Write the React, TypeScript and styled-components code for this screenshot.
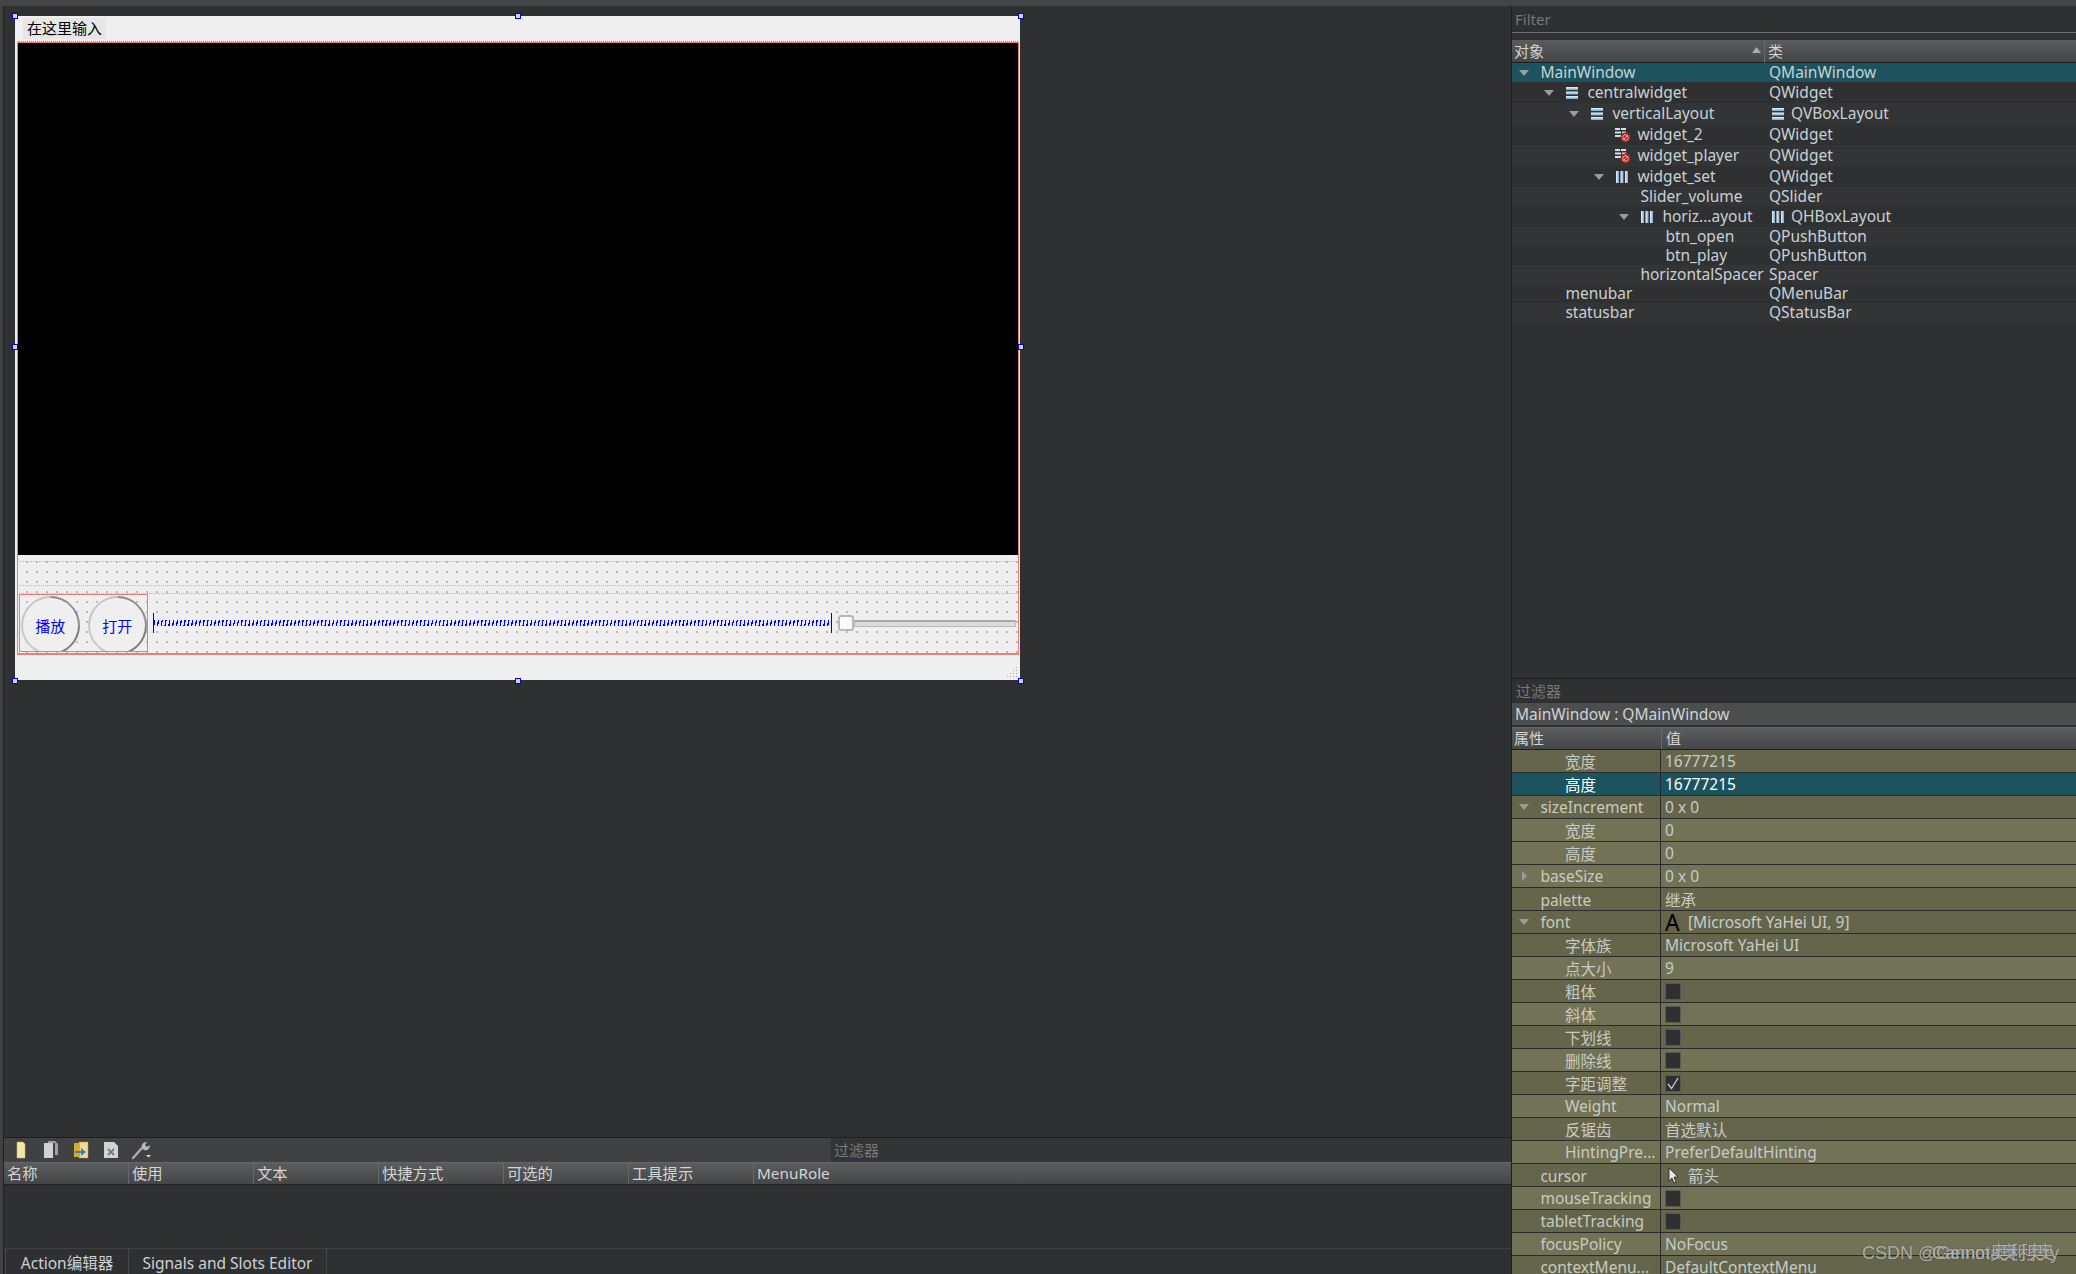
import React from "react";
import styled, { createGlobalStyle } from "styled-components";

const GlobalStyle = createGlobalStyle`
  html, body { margin: 0; padding: 0; width: 2076px; height: 1274px; overflow: hidden; background: #2f3032; }
  body { font-family: "Noto Sans", "Noto Sans CJK SC", sans-serif; font-size: 15.5px; color: #c8ccc8; }
  * { box-sizing: border-box; }
`;

const Page = styled.div`
  width: 2076px; height: 1274px; display: flex; flex-direction: column; overflow: hidden; position: relative;
`;
const TopBar = styled.div`
  height: 6px; flex: none; background: #434547; overflow: hidden; display: block;
`;
const Body = styled.div`
  flex: 1; min-height: 0; display: flex;
`;
const LeftStrip = styled.div`
  width: 4px; flex: none; background: #3f4143; border-right: 1px solid #1f2021;
`;
const Center = styled.div`
  width: 1507px; flex: none; display: flex; flex-direction: column;
`;
const Canvas = styled.div`
  flex: 1; min-height: 0; padding: 10px 0 0 11px; background: #2f3032;
`;
const Form = styled.div`
  width: 1005px; height: 664px; background: #efefef; position: relative;
`;
const MenuBar = styled.div`
  height: 24px; padding: 2px 0 0 8px; background: #efefef;
`;
const MenuHint = styled.div`
  width: 83px; height: 21px; background: #e6e6e6; color: #000; font-size: 15px; line-height: 21px; text-align: center;
`;
const LayoutBox = styled.div`
  margin: 2px 0 0 2px; width: 1002px; height: 613px; border: 1px solid #f47a7a; border-bottom-width: 2px; display: flex; flex-direction: column; position: relative;
  &::before { content: ""; position: absolute; left: 0; right: 0; top: -2px; border-top: 1px dotted #999; }
`;
const Video = styled.div`
  height: 512px; flex: none; background: #000;
`;
const SetArea = styled.div`
  flex: 1; padding: 6px 0 0 1px; display: flex; flex-direction: column;
  background-image: radial-gradient(circle at center, #9a9a9a 0.65px, transparent 0.8px);
  background-size: 10px 10px;
  background-position: 4px 2px;
`;
const DotLine = styled.div<{ $gap: number }>`
  height: 1px; margin-top: ${(p) => p.$gap}px; border-top: 1px dotted #b5b5b5; flex: none;
`;
const ControlRow = styled.div`
  height: 58px; display: flex; align-items: center;
`;
const ButtonBox = styled.div`
  width: 129px; height: 58px; flex: none; border: 1px solid #f47a7a; display: flex; gap: 8px; padding: 1px 0 0 1px; overflow: hidden;
`;
const RoundButton = styled.div`
  width: 59px; height: 59px; flex: none; border-radius: 50%;
  border: 2.5px solid; border-color: #c4c4c4 #8c8c8c #7c7c7c #c8c8c8; transform: rotate(-45deg);
  display: flex; align-items: center; justify-content: center; background: #efefef; 
`;
const ButtonLabel = styled.span`
  color: #0000ff; font-size: 15px; transform: rotate(45deg);
`;
const Slider = styled.div`
  margin-left: 5px; flex: 1; height: 20px; display: flex; align-items: center; padding-right: 2px;
`;
const SliderFill = styled.div`
  width: 679px; height: 20px; flex: none; border-left: 1.5px solid #0000dd; border-right: 1.5px solid #0000dd; display: flex; align-items: center;
`;
const Wave = styled.div`
  width: 100%; height: 6px;
  background: repeating-linear-gradient(100deg, #0000ff 0 1.3px, #e6e6ff 1.3px 3.75px);
`;
const SliderHandle = styled.div`
  width: 16px; height: 16px; margin-left: 6px; flex: none; border: 2px solid #b8b8b8; border-radius: 3px; background: #fbfbfb;
`;
const SliderGroove = styled.div`
  flex: 1; height: 7px; background: #dcdcdc; border: 1px solid #b9b9b9; border-top: 2px solid #a9a9a9; border-radius: 1px;
`;
const Handle = styled.div<{ $x: number; $y: number }>`
  position: absolute; width: 6px; height: 6px; border: 1.5px solid #0000e0; background: #cfd2e8;
  left: ${(p) => p.$x}px; top: ${(p) => p.$y}px;
`;
const Grip = styled.svg`
  position: absolute; right: 2px; bottom: 2px;
`;

const ActionPanel = styled.div`
  height: 137px; flex: none; border-top: 1px solid #1d1e1f; display: flex; flex-direction: column; background: #2f3032;
`;
const ActionBar = styled.div`
  height: 24px; flex: none; background: #3f4143; display: flex; align-items: center; padding-left: 7px;
`;
const ToolIcon = styled.svg`
  width: 20px; height: 20px; margin-right: 10px; flex: none;
`;
const ActionFilter = styled.div`
  margin-left: auto; width: 680px; height: 24px; background: #333436; color: #77797a; font-size: 15px; line-height: 24px; padding-left: 3px;
`;
const ActionHead = styled.div`
  height: 23px; flex: none; display: grid; grid-template-columns: repeat(6, 125px) 1fr;
  background: linear-gradient(#5a5c5d, #444648); border-bottom: 1px solid #222; border-top: 1px solid #636566;
`;
const HeadCell = styled.div`
  padding-left: 3px; border-right: 1px solid #66686a; color: #d4d4d4; font-size: 15.3px; line-height: 21px; white-space: nowrap;
  &:last-child { border-right: 0; }
`;
const ActionEmpty = styled.div`
  flex: 1;
`;
const Tabs = styled.div`
  height: 26px; flex: none; display: flex; border-top: 1px solid #3f4143; padding-left: 1px;
`;
const Tab = styled.div<{ $w: number }>`
  width: ${(p) => p.$w}px; height: 25px; border-right: 1px solid #45474a; border-left: 1px solid #45474a; color: #d0d0d0; font-size: 15.5px; line-height: 28px; text-align: center; white-space: nowrap;
  & + & { border-left: 0; }
`;

const RightPanel = styled.div`
  width: 565px; flex: none; border-left: 1px solid #1d1e1f; display: flex; flex-direction: column; background: #2f3032;
`;
const TreeSection = styled.div`
  flex: 1; min-height: 0; display: flex; flex-direction: column;
`;
const FilterInput = styled.div`
  height: 27px; flex: none; border-bottom: 1px solid #6d6f70; color: #77797a; font-size: 15px; line-height: 26px; padding-left: 3px; background: #2f3032;
`;
const TreeHead = styled.div`
  margin-top: 7px; height: 23px; flex: none; display: grid; grid-template-columns: 253px 1fr;
  background: linear-gradient(#5a5c5d, #444648); border-bottom: 1px solid #1d1e1f;
`;
const TreeHeadCell = styled.div`
  position: relative; padding-left: 2px; color: #d4d4d4; font-size: 15px; line-height: 23px;
  &:first-child { border-right: 1px solid #66686a; }
  & + & { padding-left: 3px; }
`;
const SortMark = styled.svg`
  position: absolute; right: 3px; top: 7px;
`;
const TreeRow = styled.div<{ $h: number; $tone: string }>`
  height: ${(p) => p.$h}px; display: grid; grid-template-columns: 253px 1fr; align-items: center; background: ${(p) => p.$tone};
  line-height: ${(p) => p.$h}px;
`;
const TreeName = styled.div<{ $depth: number }>`
  display: flex; align-items: center; padding-left: ${(p) => 7 + 25 * p.$depth}px; white-space: nowrap; color: #c8d0d4; overflow: visible;
`;
const Twisty = styled.div`
  width: 21.4px; flex: none; display: flex; align-items: center;
`;
const NodeIcon = styled.div`
  width: 22px; flex: none; margin-left: 0; display: flex; align-items: center;
`;
const TreeClass = styled.div`
  display: flex; align-items: center; padding-left: 4px; color: #c8d0d4;
`;
const ClassIcon = styled.div`
  width: 22px; flex: none; display: flex; align-items: center; padding-left: 2px;
`;

const PropSection = styled.div`
  height: 596px; flex: none; border-top: 1px solid #1d1e1f; display: flex; flex-direction: column; overflow: hidden;
`;
const PropFilter = styled.div`
  height: 24px; flex: none; color: #77797a; font-size: 15px; line-height: 24px; padding-left: 4px;
`;
const PropTitle = styled.div`
  height: 22px; flex: none; background: #4c4e4e; color: #cfd3d3; font-size: 15.5px; line-height: 22px; padding-left: 3px; white-space: nowrap;
`;
const PropHead = styled.div`
  margin-top: 2px; height: 23px; flex: none; display: grid; grid-template-columns: 149px 1fr;
  background: linear-gradient(#5a5c5d, #444648); border-bottom: 1px solid #1d1e1f; border-top: 1px solid #636566;
`;
const PropHeadCell = styled.div`
  padding-left: 2px; color: #d4d4d4; font-size: 15px; line-height: 21px;
  & + & { padding-left: 4px; border-left: 1px solid #66686a; }
`;
const PropRow = styled.div<{ $tone: string }>`
  height: 23px; flex: none; display: grid; grid-template-columns: 149px 1fr; background: ${(p) => p.$tone}; border-bottom: 1px solid #2a2b2c;
`;
const PropName = styled.div<{ $level: number; $sel?: boolean }>`
  display: flex; align-items: center; padding-left: ${(p) => (p.$level ? 53 : 7)}px; border-right: 1px solid #2a2b2c; white-space: nowrap; overflow: hidden;
  color: ${(p) => (p.$sel ? "#fff" : "#c9cbc0")};
`;
const PropValue = styled.div<{ $sel?: boolean }>`
  display: flex; align-items: center; padding-left: 4px; white-space: nowrap; color: ${(p) => (p.$sel ? "#fff" : "#c6cccb")};
`;
const Check = styled.div`
  width: 16px; height: 17px; background: #2f3032; border: 1px solid #585a50; border-radius: 1px; display: flex; align-items: center; justify-content: center;
`;
const BigA = styled.span`
  color: #000; font-size: 23px; width: 23px; line-height: 22px; flex: none;
`;
const CursorWrap = styled.div`
  width: 23px; flex: none; display: flex; padding-left: 3px;
`;
const Watermark = styled.div`
  position: absolute; left: 1862px; top: 1241px; width: 214px; height: 24px; font-family: "Liberation Sans", "Noto Sans CJK SC", sans-serif; font-size: 18px; line-height: 24px; color: rgba(225,225,225,0.72); white-space: nowrap; text-shadow: 0 0 1px rgba(0,0,0,.6);
`;
const WatermarkOver = styled.span`
  position: absolute; left: 70px; top: 0;
`;

const Tri = ({ open }: { open: boolean }) =>
  open ? (
    <svg width="10" height="6" viewBox="0 0 10 6"><path d="M0 0h10L5 6z" fill="#9a9c9c" /></svg>
  ) : (
    <svg width="10" height="10" viewBox="0 0 10 10"><path d="M3 0v10l5-5z" fill="#9a9c9c" /></svg>
  );

const BarDefs = () => (
  <defs>
    <linearGradient id="vb" x1="0" y1="0" x2="0" y2="1">
      <stop offset="0" stopColor="#eef6fb" />
      <stop offset="1" stopColor="#6fa8d0" />
    </linearGradient>
    <linearGradient id="hb" x1="0" y1="0" x2="1" y2="0">
      <stop offset="0" stopColor="#eef6fb" />
      <stop offset="1" stopColor="#6fa8d0" />
    </linearGradient>
  </defs>
);
const VBox = () => (
  <svg width="14" height="14" viewBox="0 0 14 14">
    <BarDefs />
    <rect x="1" y="1" width="12" height="3" fill="url(#vb)" />
    <rect x="1" y="5.5" width="12" height="3" fill="url(#vb)" />
    <rect x="1" y="10" width="12" height="3" fill="url(#vb)" />
  </svg>
);
const HBox = () => (
  <svg width="14" height="14" viewBox="0 0 14 14">
    <BarDefs />
    <rect x="1" y="1" width="3" height="12" fill="url(#hb)" />
    <rect x="5.5" y="1" width="3" height="12" fill="url(#hb)" />
    <rect x="10" y="1" width="3" height="12" fill="url(#hb)" />
  </svg>
);
const Broken = () => (
  <svg width="16" height="16" viewBox="0 0 16 16">
    <rect x="0" y="1" width="5" height="2" fill="#cfe2f0" />
    <rect x="6" y="1" width="5" height="2" fill="#cfe2f0" />
    <rect x="0" y="4.5" width="6" height="2" fill="#cfe2f0" />
    <rect x="7" y="4.5" width="4" height="2" fill="#cfe2f0" />
    <rect x="0" y="8" width="6" height="2" fill="#cfe2f0" />
    <circle cx="10.5" cy="10.5" r="5" fill="#b31d1d" />
    <circle cx="10.5" cy="10.5" r="2.8" fill="none" stroke="#f0c0c0" strokeWidth="1" />
    <path d="M8.5 12.5l4-4" stroke="#f0c0c0" strokeWidth="1" />
  </svg>
);

type Node = { name: string; cls: string; d: number; h: number; open?: boolean; icon?: "v" | "h" | "b"; ci?: "v" | "h"; sel?: boolean };
const nodes: Node[] = [
  { name: "MainWindow", cls: "QMainWindow", d: 0, h: 19, open: true, sel: true },
  { name: "centralwidget", cls: "QWidget", d: 1, h: 21, open: true, icon: "v" },
  { name: "verticalLayout", cls: "QVBoxLayout", d: 2, h: 21, open: true, icon: "v", ci: "v" },
  { name: "widget_2", cls: "QWidget", d: 3, h: 21, icon: "b" },
  { name: "widget_player", cls: "QWidget", d: 3, h: 21, icon: "b" },
  { name: "widget_set", cls: "QWidget", d: 3, h: 21, open: true, icon: "h" },
  { name: "Slider_volume", cls: "QSlider", d: 4, h: 19 },
  { name: "horiz...ayout", cls: "QHBoxLayout", d: 4, h: 21, open: true, icon: "h", ci: "h" },
  { name: "btn_open", cls: "QPushButton", d: 5, h: 19 },
  { name: "btn_play", cls: "QPushButton", d: 5, h: 19 },
  { name: "horizontalSpacer", cls: "Spacer", d: 4, h: 19 },
  { name: "menubar", cls: "QMenuBar", d: 1, h: 19 },
  { name: "statusbar", cls: "QStatusBar", d: 1, h: 19 },
];
const iconOf = (k?: string) => (k === "v" ? <VBox /> : k === "h" ? <HBox /> : k === "b" ? <Broken /> : null);

const D = "#64654a";
const L = "#717256";
const S = "#1c535e";
type Prop = { n: string; v?: string; lvl: number; tone: string; arrow?: "o" | "c"; kind?: "check" | "checked" | "font" | "cursor"; sel?: boolean };
const props: Prop[] = [
  { n: "宽度", v: "16777215", lvl: 1, tone: D },
  { n: "高度", v: "16777215", lvl: 1, tone: S, sel: true },
  { n: "sizeIncrement", v: "0 x 0", lvl: 0, tone: D, arrow: "o" },
  { n: "宽度", v: "0", lvl: 1, tone: L },
  { n: "高度", v: "0", lvl: 1, tone: L },
  { n: "baseSize", v: "0 x 0", lvl: 0, tone: L, arrow: "c" },
  { n: "palette", v: "继承", lvl: 0, tone: D },
  { n: "font", v: "[Microsoft YaHei UI, 9]", lvl: 0, tone: D, arrow: "o", kind: "font" },
  { n: "字体族", v: "Microsoft YaHei UI", lvl: 1, tone: D },
  { n: "点大小", v: "9", lvl: 1, tone: L },
  { n: "粗体", lvl: 1, tone: D, kind: "check" },
  { n: "斜体", lvl: 1, tone: L, kind: "check" },
  { n: "下划线", lvl: 1, tone: D, kind: "check" },
  { n: "删除线", lvl: 1, tone: L, kind: "check" },
  { n: "字距调整", lvl: 1, tone: D, kind: "checked" },
  { n: "Weight", v: "Normal", lvl: 1, tone: L },
  { n: "反锯齿", v: "首选默认", lvl: 1, tone: D },
  { n: "HintingPre...", v: "PreferDefaultHinting", lvl: 1, tone: L },
  { n: "cursor", v: "箭头", lvl: 0, tone: D, kind: "cursor" },
  { n: "mouseTracking", lvl: 0, tone: L, kind: "check" },
  { n: "tabletTracking", lvl: 0, tone: D, kind: "check" },
  { n: "focusPolicy", v: "NoFocus", lvl: 0, tone: L },
  { n: "contextMenu...", v: "DefaultContextMenu", lvl: 0, tone: D },
];

const stubs: [number, number, string][] = [
  [114, 11, "#6f8db5"], [139, 9, "#c9d6ea"], [165, 5, "#b8a44a"], [184, 13, "#7d8ea8"], [206, 14, "#5c6b88"],
  [231, 12, "#8a8c8e"], [254, 14, "#77797b"], [279, 12, "#8a8c8e"], [304, 8, "#5f7391"], [326, 13, "#5f6f8a"],
  [355, 9, "#b52020"], [374, 14, "#2d5f95"],
];
const handles: [number, number][] = [
  [-3, -3], [500, -3], [1003, -3], [-3, 328], [1003, 328], [-3, 662], [500, 662], [1003, 662],
];

export default function App() {
  return (
    <Page>
      <GlobalStyle />
      <TopBar>
        <svg width="400" height="6" viewBox="0 0 400 6">
          <rect x="79" y="0" width="1" height="6" fill="#2a2b2c" />
          <rect x="103" y="0" width="1" height="6" fill="#2a2b2c" />
          {stubs.map(([x, w, c]) => (
            <rect key={x} x={x} y="0" width={w} height="3" fill={c} />
          ))}
        </svg>
      </TopBar>
      <Body>
        <LeftStrip />
        <Center>
          <Canvas>
            <Form>
              <MenuBar>
                <MenuHint>在这里输入</MenuHint>
              </MenuBar>
              <LayoutBox>
                <Video />
                <SetArea>
                  <DotLine $gap={0} />
                  <DotLine $gap={23} />
                  <DotLine $gap={7} />
                  <ControlRow>
                    <ButtonBox>
                      <RoundButton><ButtonLabel>播放</ButtonLabel></RoundButton>
                      <RoundButton><ButtonLabel>打开</ButtonLabel></RoundButton>
                    </ButtonBox>
                    <Slider>
                      <SliderFill><Wave /></SliderFill>
                      <SliderHandle />
                      <SliderGroove />
                    </Slider>
                  </ControlRow>
                </SetArea>
              </LayoutBox>
              <Grip width="12" height="12" viewBox="0 0 12 12">
                {[[10,1],[7,4],[10,4],[4,7],[7,7],[10,7],[1,10],[4,10],[7,10],[10,10]].map(([x, y]) => (
                  <rect key={`${x}-${y}`} x={x} y={y} width="1" height="1" fill="#a8a8a8" />
                ))}
              </Grip>
              {handles.map(([x, y]) => (
                <Handle key={`${x}-${y}`} $x={x} $y={y} />
              ))}
            </Form>
          </Canvas>
          <ActionPanel>
            <ActionBar>
              <ToolIcon viewBox="0 0 20 20">
                <path d="M6 2h6l2 2v14H6z" fill="#f3e6a4" stroke="#c9b866" strokeWidth="0.5" />
              </ToolIcon>
              <ToolIcon viewBox="0 0 20 20">
                <path d="M7 1h7l3 3v11h-3V3H7z" fill="#9d9fa0" />
                <path d="M3 3h9v15H3z" fill="#cfd1d1" />
              </ToolIcon>
              <ToolIcon viewBox="0 0 20 20">
                <path d="M8 2h9v16H8z" fill="#f0dc8c" stroke="#b79c3a" strokeWidth="0.5" />
                <path d="M3 3h6v14H3z" fill="#d7a92c" />
                <path d="M4 11h6V8l5 4-5 4v-3H4z" fill="#2f7fd8" />
              </ToolIcon>
              <ToolIcon viewBox="0 0 20 20">
                <path d="M3 2h10l4 4v12H3z" fill="#d2d4d4" />
                <path d="M7 9l6 6m0-6l-6 6" stroke="#767879" strokeWidth="1.8" />
              </ToolIcon>
              <ToolIcon viewBox="0 0 20 20">
                <path d="M2 18l9-10" stroke="#a8aaab" strokeWidth="2.4" strokeLinecap="round" />
                <path d="M11 8c-1-3 1-6 5-6l-2 3 2 2 3-2c0 4-3 6-6 5z" fill="#b8babb" />
                <path d="M15 15h5l-2.500 2.500z" fill="#e0e0e0" />
              </ToolIcon>
              <ActionFilter>过滤器</ActionFilter>
            </ActionBar>
            <ActionHead>
              {["名称", "使用", "文本", "快捷方式", "可选的", "工具提示", "MenuRole"].map((t) => (
                <HeadCell key={t}>{t}</HeadCell>
              ))}
            </ActionHead>
            <ActionEmpty />
            <Tabs>
              <Tab $w={124}>Action编辑器</Tab>
              <Tab $w={198}>Signals and Slots Editor</Tab>
            </Tabs>
          </ActionPanel>
        </Center>
        <RightPanel>
          <TreeSection>
            <FilterInput>Filter</FilterInput>
            <TreeHead>
              <TreeHeadCell>
                对象
                <SortMark width="9" height="6" viewBox="0 0 9 6"><path d="M0 6h9L4.500 0z" fill="#a8aaab" /></SortMark>
              </TreeHeadCell>
              <TreeHeadCell>类</TreeHeadCell>
            </TreeHead>
            {nodes.map((n, i) => (
              <TreeRow key={n.name} $h={n.h} $tone={n.sel ? S : i % 2 ? "#2f3032" : "#333436"}>
                <TreeName $depth={n.d}>
                  <Twisty>{n.open ? <Tri open /> : null}</Twisty>
                  {n.icon ? <NodeIcon>{iconOf(n.icon)}</NodeIcon> : null}
                  {n.name}
                </TreeName>
                <TreeClass>
                  {n.ci ? <ClassIcon>{iconOf(n.ci)}</ClassIcon> : null}
                  {n.cls}
                </TreeClass>
              </TreeRow>
            ))}
          </TreeSection>
          <PropSection>
            <PropFilter>过滤器</PropFilter>
            <PropTitle>MainWindow : QMainWindow</PropTitle>
            <PropHead>
              <PropHeadCell>属性</PropHeadCell>
              <PropHeadCell>值</PropHeadCell>
            </PropHead>
            {props.map((p, i) => (
              <PropRow key={i} $tone={p.tone}>
                <PropName $level={p.lvl} $sel={p.sel}>
                  {p.lvl === 0 ? <Twisty>{p.arrow ? <Tri open={p.arrow === "o"} /> : null}</Twisty> : null}
                  {p.n}
                </PropName>
                <PropValue $sel={p.sel}>
                  {p.kind === "check" ? <Check /> : null}
                  {p.kind === "checked" ? (
                    <Check>
                      <svg width="12" height="13" viewBox="0 0 12 13"><path d="M1 7l3.500 4.500L11 1" fill="none" stroke="#c9cbc8" strokeWidth="1.3" /></svg>
                    </Check>
                  ) : null}
                  {p.kind === "font" ? <BigA>A</BigA> : null}
                  {p.kind === "cursor" ? (
                    <CursorWrap>
                      <svg width="11" height="17" viewBox="0 0 11 17"><path d="M1 1v13l3-3 2 5 2-1-2-5h4z" fill="#e8e8e8" stroke="#222" strokeWidth="0.8" /></svg>
                    </CursorWrap>
                  ) : null}
                  {p.v}
                </PropValue>
              </PropRow>
            ))}
          </PropSection>
        </RightPanel>
      </Body>
      <Watermark>
        CSDN @Gemma奥利奥
        <WatermarkOver>Cannot奥利奥ry</WatermarkOver>
      </Watermark>
    </Page>
  );
}
